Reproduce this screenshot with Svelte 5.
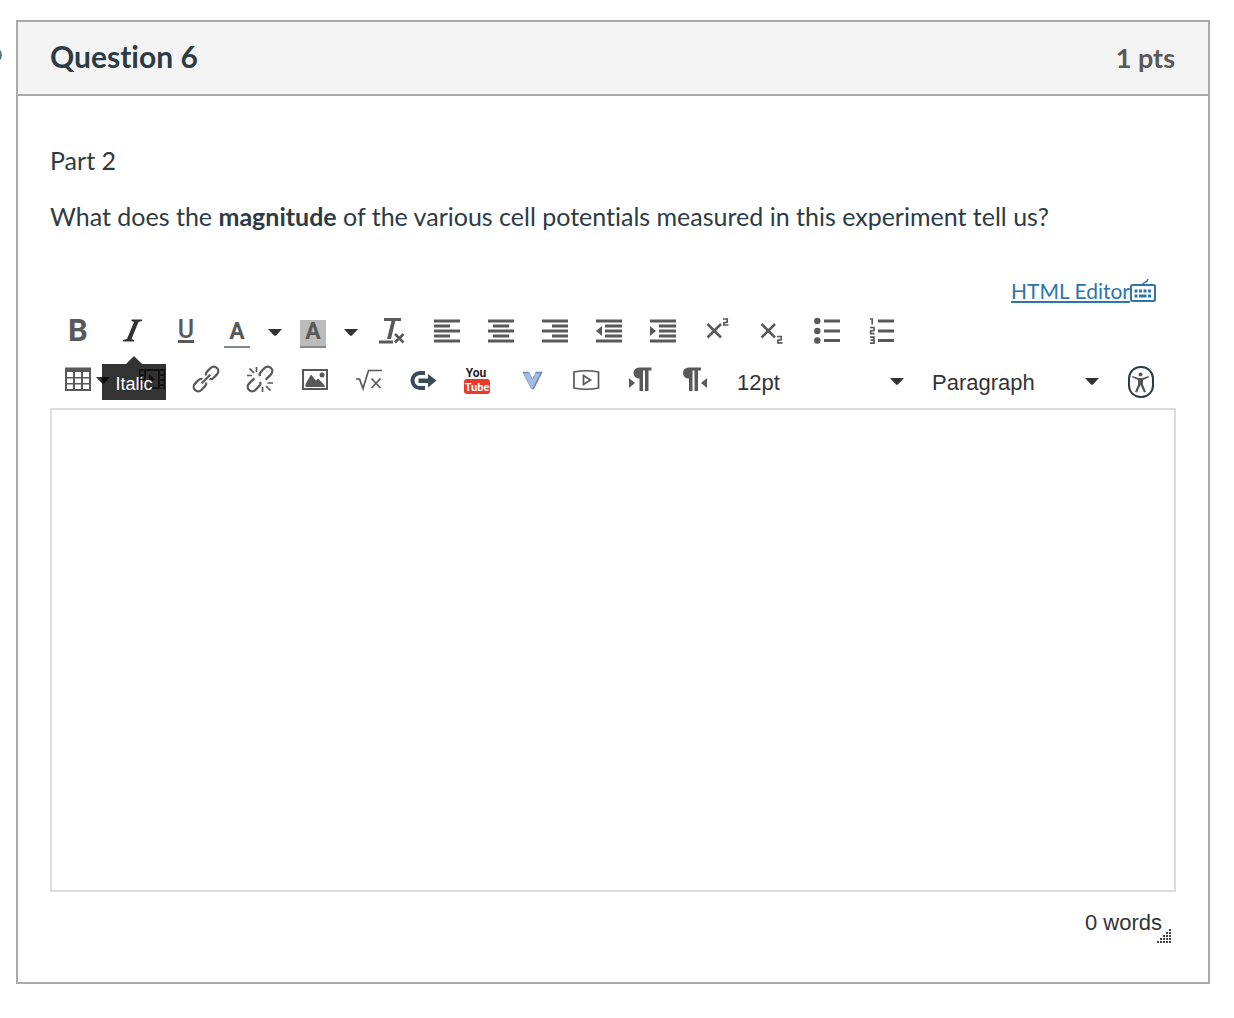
<script lang="ts">
  let answer = $state('');
  let size = $state('12pt');
  let block = $state('Paragraph');
  let words = $derived(answer.trim() ? answer.trim().split(/\s+/).length : 0);

  const alignIcons = [
    { name: 'Align left', rows: [[1, 26], [1, 16], [1, 26], [1, 16], [1, 26]] },
    { name: 'Align center', rows: [[1, 26], [6, 16], [1, 26], [6, 16], [1, 26]] },
    { name: 'Align right', rows: [[1, 26], [11, 16], [1, 26], [11, 16], [1, 26]] },
    { name: 'Decrease indent', rows: [[1, 26], [10, 17], [10, 17], [10, 17], [1, 26]], arrow: 'M7 9v10L1 14z' },
    { name: 'Increase indent', rows: [[1, 26], [10, 17], [10, 17], [10, 17], [1, 26]], arrow: 'M1 9v10l6-5z' }
  ];
  const rowTops = [2, 7, 12, 17, 22];

  // Resize grip: a triangle of dots, one more in each row
  const dots: number[][] = [];
  for (let r = 0; r < 5; r++) {
    for (let c = 4 - r; c < 5; c++) dots.push([c * 3 + 1, r * 3 + 1]);
  }
</script>

{#snippet caret()}
  <svg class="caret" viewBox="0 0 14 7" aria-hidden="true"><path d="M0 0h14L8 6.4q-1 .8-2 0z" /></svg>
{/snippet}

<main>
  <span class="pointer" aria-hidden="true"></span>
  <section class="question">
    <header>
      <h2>Question 6</h2>
      <span class="points">1 pts</span>
    </header>

    <div class="body">
      <p>Part 2</p>
      <p>What does the <strong>magnitude</strong> of the various cell potentials measured in this experiment tell us?</p>

      <div class="switch">
        <a href="#html">HTML Editor</a>
        <button class="keys" aria-label="Keyboard shortcuts">
          <svg width="26" height="24" viewBox="0 0 26 24" aria-hidden="true">
            <rect x="1" y="6" width="24" height="16" rx="1.5" fill="none" stroke="currentColor" stroke-width="2" />
            <path d="M12.500 6C12.500 3 17 4.500 18 0" fill="none" stroke="currentColor" stroke-width="1.500" />
            <path d="M4.500 10.500h3v3h-3zM9 10.500h3v3H9zM13.500 10.500h3v3h-3zM18 10.500h3v3h-3zM4.500 15.500h3v3h-3zM9 15.500h7.500v3H9zM18 15.500h3v3h-3z" fill="currentColor" />
          </svg>
        </button>
      </div>

      <div class="toolbar" role="toolbar" aria-label="Formatting">
        <div class="group">
          <button class="tool bold" aria-label="Bold">B</button>
          <button class="tool" aria-label="Italic">
            <svg class="icon" viewBox="0 0 28 28">
              <path d="M13.500 2.500H24v1.500L20.500 5 13.500 22l2.500 1v1.500H5V23l4-1L16 5l-2.500-1z" class="dark" />
            </svg>
            <span class="tip" role="tooltip">Italic</span>
          </button>
          <button class="tool underline" aria-label="Underline"><span>U</span></button>
        </div>
        <div class="group">
          <button class="color" aria-label="Text color"><span class="swatch">A</span></button>
          <button class="drop" aria-label="Choose text color">{@render caret()}</button>
          <button class="color" aria-label="Background color"><span class="swatch filled">A</span></button>
          <button class="drop" aria-label="Choose background color">{@render caret()}</button>
          <button class="tool" aria-label="Clear formatting">
            <svg class="icon" viewBox="0 0 28 28">
              <path d="M5 1h17v3H5zM12.500 4h3.800L12 22H8zM0 23.500h14v3H0z" />
              <path d="M16 17l8.500 8.500M24.500 17L16 25.500" class="line thick" />
            </svg>
          </button>
          {#each alignIcons as icon}
            <button class="tool" aria-label={icon.name}>
              <svg class="icon" viewBox="0 0 28 28">
                {#each icon.rows as [x, w], i}
                  <rect {x} y={rowTops[i] + 0.5} width={w} height="3" />
                {/each}
                {#if icon.arrow}<path d={icon.arrow} />{/if}
              </svg>
            </button>
          {/each}
          <button class="tool" aria-label="Superscript">
            <svg class="icon" viewBox="0 0 28 28">
              <path d="M4.500 7L18 20.500M18 7L4.500 20.500" class="line thick" />
              <path d="M20 2h4.200v3L20.800 6v2H25.500" class="line fine" />
            </svg>
          </button>
          <button class="tool" aria-label="Subscript">
            <svg class="icon" viewBox="0 0 28 28">
              <path d="M4.500 7L18 20.500M18 7L4.500 20.500" class="line thick" />
              <path d="M20 19.500h4.200v3l-3.400 1v2.300H25.500" class="line fine" />
            </svg>
          </button>
        </div>
        <div class="group lists">
          <button class="tool" aria-label="Bullet list">
            <svg class="icon" viewBox="0 0 28 28">
              <circle cx="4.300" cy="4" r="3.200" /><circle cx="4.300" cy="14" r="3.200" /><circle cx="4.300" cy="23.500" r="3.200" />
              <path d="M11 2.500h16v3H11zM11 12.500h16v3H11zM11 22h16v3H11z" />
            </svg>
          </button>
          <button class="tool" aria-label="Numbered list">
            <svg class="icon" viewBox="0 0 28 28">
              <path d="M11 2.500h16v3H11zM11 12.500h16v3H11zM11 22h16v3H11z" />
              <path d="M3 2h2.200v5.500M3 10.500h4v3L3.700 14v2.700H7.500M3 20.200h4v6H3M3.500 23.200H7" class="line fine" />
            </svg>
          </button>
        </div>
      </div>

      <div class="toolbar second" role="toolbar" aria-label="Insert">
        <div class="group">
          <button class="table" aria-label="Table">
            <svg class="icon" viewBox="0 0 28 28">
              <path d="M1 1.500h26V25H1zM3 6V11h6V6zM11 6V11h6V6zM19 6V11h6V6zM3 12.500V17h6v-4.500zM11 12.500V17h6v-4.500zM19 12.500V17h6v-4.500zM3 18.500V23h6v-4.500zM11 18.500V23h6v-4.500zM19 18.500V23h6v-4.500z" fill-rule="evenodd" />
            </svg>
            {@render caret()}
          </button>
          <button class="tool" aria-label="Insert media">
            <svg class="icon" viewBox="0 0 28 28">
              <path d="M1 3h26v20H1zM2.500 5v3H6V5zM2.500 10v3H6v-3zM2.500 15v3H6v-3zM2.500 20v2H6v-2zM22 5v3h3.500V5zM22 10v3h3.500v-3zM22 15v3h3.500v-3zM22 20v2h3.500v-2zM8 5v16h12V5z" fill-rule="evenodd" />
              <path d="M11 8v10l6-5z" />
            </svg>
          </button>
          <button class="tool" aria-label="Insert link">
            <svg class="icon" viewBox="0 0 28 28">
              <g transform="rotate(-45 14 13)" class="line link">
                <path d="M11.500 15.500a4 4 0 0 1-3.500 2H3a4.500 4.500 0 0 1 0-9H8a4 4 0 0 1 3.500 2" />
                <path d="M16.500 10.500a4 4 0 0 1 3.500-2h5a4.500 4.500 0 0 1 0 9H20a4 4 0 0 1-3.500-2" />
                <path d="M8 13h12" />
              </g>
            </svg>
          </button>
          <button class="tool" aria-label="Remove link">
            <svg class="icon" viewBox="0 0 28 28">
              <g transform="rotate(-45 14 13)" class="line link">
                <path d="M17.500 17.500H25a4.500 4.500 0 0 0 0-9H19.500a4 4 0 0 0-3.500 2.500" />
                <path d="M10.500 8.500H3a4.500 4.500 0 0 0 0 9H8.500a4 4 0 0 0 3.500-2.500" />
              </g>
              <path d="M10.500 1v5M3.500 2.500l4.500 4.500M1 9.500h5M16.500 21v5M20 20l4.500 4.500M21.500 17H27" class="line fine" />
            </svg>
          </button>
        </div>
        <div class="group">
          <button class="tool" aria-label="Embed image">
            <svg class="icon" viewBox="0 0 28 28">
              <rect x="2" y="4" width="24" height="19" class="line" />
              <path d="M4.500 21v-3L10 8.500l5 6 2-2 6.500 6.500V21z" /><circle cx="21" cy="9" r="2.500" />
            </svg>
          </button>
          <button class="tool" aria-label="Insert math equation">
            <svg class="icon" viewBox="0 0 28 28">
              <path d="M1 13h3.500l3.500 9.500 5.500-18H27" class="line fine" />
              <path d="M16.500 12.500l9 9.500M25.500 12.500l-9 9.500" class="line fine" />
            </svg>
          </button>
          <button class="tool" aria-label="External tool">
            <svg class="icon" viewBox="0 0 28 28">
              <path d="M16 7H11a7.500 7.500 0 0 0 0 15h5" fill="none" stroke="#3b4a5b" stroke-width="4" />
              <path d="M9.500 12.500H19V8l8.500 6.500L19 21.500V17H9.500z" fill="#3b4a5b" stroke="#fff" stroke-width="1" paint-order="stroke" />
            </svg>
          </button>
          <button class="tool" aria-label="YouTube">
            <svg class="icon" viewBox="0 0 28 28">
              <text x="13" y="11" class="you">You</text>
              <rect x="1" y="13" width="26" height="15" rx="3" fill="#e8392b" />
              <text x="14" y="25" class="tube">Tube</text>
            </svg>
          </button>
        </div>
        <div class="group">
          <button class="tool" aria-label="Vimeo">
            <svg class="icon" viewBox="0 0 28 28">
              <path d="M5 6.500h6l3.300 7L18 6.500h5.500L15.500 23h-2z" fill="#a5bce4" stroke="#8ea4cc" />
              <path d="M5 6.500h5.500M17.500 6.500h6L15 23" fill="none" stroke="#7088b4" stroke-width="1.500" />
            </svg>
          </button>
          <button class="tool" aria-label="Record media">
            <svg class="icon" viewBox="0 0 28 28">
              <path d="M2 6Q14 3.500 26.500 6V22Q14 24.500 2 22z" class="line fine" />
              <path d="M11.500 9.500v9l7-4.500z" class="line fine" />
            </svg>
          </button>
          <button class="tool" aria-label="Left to right">
            <svg class="icon" viewBox="0 0 28 28">
              <path d="M3 12v10l6-5z" />
              <path d="M13 1.500h12.500v3h-3V25H19V4.500h-2V25H13.500V12.500H13a5.500 5.500 0 0 1 0-11z" />
            </svg>
          </button>
        </div>
        <div class="group">
          <button class="tool" aria-label="Right to left">
            <svg class="icon" viewBox="0 0 28 28">
              <path d="M26 12v10l-6-5z" />
              <path d="M7.500 1.500H20v3h-3V25h-3.500V4.500h-2V25H8V12.500h-.5a5.500 5.500 0 0 1 0-11z" />
            </svg>
          </button>
        </div>
        <label class="pick">
          <select bind:value={size} aria-label="Font sizes">
            <option>12pt</option><option>14pt</option><option>18pt</option>
          </select>
          {@render caret()}
        </label>
        <label class="pick">
          <select bind:value={block} aria-label="Blocks">
            <option>Paragraph</option><option>Heading 2</option><option>Preformatted</option>
          </select>
          {@render caret()}
        </label>
        <button class="access" aria-label="Check accessibility">
          <svg width="26" height="32" viewBox="0 0 26 32" aria-hidden="true">
            <rect x="1" y="1" width="24" height="30" rx="11.500" fill="none" stroke="#2d3b45" stroke-width="2" />
            <circle cx="12.500" cy="8.500" r="2" fill="#555" />
            <path d="M4.500 10l6 2h4l6-2 .5 1.300-6 2.700v4.500l3 7.500-2 .5-3.500-7.500L9 26.500 7 26l3-7.500V14L4 11.300z" fill="#555" />
          </svg>
        </button>
      </div>

      <textarea aria-label="Answer" bind:value={answer}></textarea>

      <footer>
        <span>{words} words</span>
        <svg class="grip" width="15" height="15" viewBox="0 0 15 15" aria-hidden="true">
          {#each dots as [x, y]}<rect {x} {y} width="2" height="2" />{/each}
        </svg>
      </footer>
    </div>
  </section>
</main>

<style>
  :global(body) { background: #fff; }
  main {
    position: relative;
    padding: 20px 24px 34px 16px;
    color: #2d3b45;
    font: 25px/32px Lato, sans-serif;
    font-variant-ligatures: none;
  }
  .pointer {
    position: absolute;
    left: -14px;
    top: 47px;
    width: 16px;
    height: 16px;
    border-radius: 50%;
    background: #5f7488;
  }
  .question { border: 2px solid #aaa; }
  header {
    display: flex;
    align-items: center;
    justify-content: space-between;
    height: 72px;
    padding: 0 33px 0 32px;
    background: #f4f4f4;
    border-bottom: 2px solid #aaa;
  }
  h2 { margin: 0 0 4px; font-size: 30px; line-height: 40px; font-weight: 700; }
  .points { font-size: 27px; font-weight: 700; color: #595959; }
  .body { padding: 48px 32px 34px; }
  p { margin: 0 0 24px; }
  button {
    margin: 0;
    padding: 0;
    border: 0;
    background: none;
    color: #595959;
    display: flex;
    align-items: center;
    justify-content: center;
  }
  .switch {
    display: flex;
    align-items: center;
    justify-content: flex-end;
    height: 30px;
    padding: 20px 20px 1px 0;
    font-size: 21px;
  }
  .switch a { color: #2d76ab; text-decoration: underline; }
  .keys { color: #2d76ab; }
  .toolbar { display: flex; align-items: center; height: 48px; padding-left: 1px; }
  .second { height: 50px; }
  .group { display: flex; align-items: center; margin-right: 1px; }
  .lists { margin-left: 1px; }
  .tool { position: relative; flex: none; width: 54px; height: 48px; }
  .icon { width: 28px; height: 28px; fill: #595959; overflow: visible; flex: none; }
  .line { fill: none; stroke: #595959; stroke-width: 2; }
  .thick { stroke-width: 2.500; }
  .fine { stroke-width: 1.700; }
  .link { stroke-width: 2.300; }
  .dark { fill: #333; }
  .bold { font: 700 31px/48px Roboto, sans-serif; }
  .underline { font: 500 25px/22px Roboto, sans-serif; }
  .underline span { border-bottom: 3px solid #595959; line-height: 21px; display: block; }
  .color { width: 46px; height: 48px; }
  .swatch {
    width: 26px;
    height: 26px;
    margin-top: 6px;
    border-bottom: 2px solid #888;
    font: 700 23px/24px Roboto, sans-serif;
  }
  .filled { background: #bbb; }
  .drop { width: 30px; height: 48px; }
  .caret { width: 14px; height: 7px; fill: #333; flex: none; }
  .drop .caret { margin-top: 3px; }
  .tip {
    position: absolute;
    z-index: 2;
    left: -3px;
    top: 57px;
    width: 64px;
    height: 36px;
    background: rgba(0, 0, 0, 0.8);
    color: #fff;
    font: 18px/40px "Liberation Sans", sans-serif;
    text-align: center;
  }
  .tip::before {
    content: "";
    position: absolute;
    left: 24px;
    top: -8px;
    border: 8px solid transparent;
    border-top: 0;
    border-bottom-color: #333;
  }
  .table { width: 74px; gap: 4px; height: 48px; padding-right: 2px; }
  .you { font: 700 12px Roboto, sans-serif; fill: #222; text-anchor: middle; }
  .tube { font: 700 11px Roboto, sans-serif; fill: #fff; text-anchor: middle; }
  .pick { display: flex; align-items: center; flex: 0 1 195px; min-width: 0; padding-top: 6px; }
  select {
    appearance: none;
    flex: 1;
    min-width: 0;
    height: 32px;
    margin: 0 -30px 0 0;
    padding: 0 30px 0 14px;
    border: 0;
    background: none;
    color: #333;
    font: 22px/32px "Liberation Sans", sans-serif;
  }
  .pick .caret { margin: 0 14px 4px 0; pointer-events: none; }
  .access { margin: 4px 22px 0 auto; }
  textarea {
    display: block;
    box-sizing: border-box;
    width: 100%;
    height: 484px;
    margin-top: 3px;
    padding: 16px;
    border: 2px solid #ddd;
    outline: 0;
    resize: none;
    font: 22px/32px "Liberation Sans", sans-serif;
  }
  footer {
    display: flex;
    justify-content: flex-end;
    align-items: flex-end;
    margin-top: 15px;
    padding-right: 5px;
    height: 41px;
    color: #333;
    font: 22px/32px "Liberation Sans", sans-serif;
  }
  footer span { align-self: flex-start; margin-right: -6px; }
  .grip { margin-bottom: 5px; fill: #444; }
</style>
